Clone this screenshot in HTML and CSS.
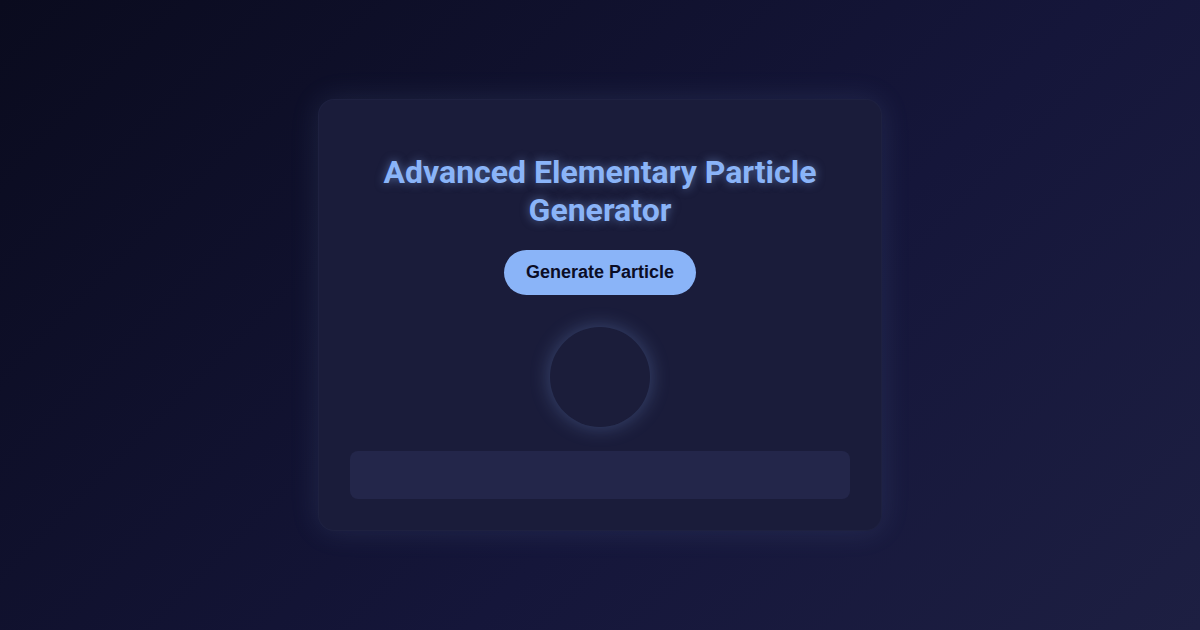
FILE: index.html
```html
<!DOCTYPE html>
<html lang="en">
<head>
<meta charset="utf-8">
<title>Advanced Elementary Particle Generator</title>
<link rel="stylesheet" href="styles.css">
</head>
<body>
  <main class="card">
    <h1 class="title">Advanced Elementary Particle Generator</h1>
    <button class="generate">Generate Particle</button>
    <div class="particle"></div>
    <div class="status"></div>
  </main>
</body>
</html>
```

FILE: styles.css
```css
html, body {
  margin: 0;
  padding: 0;
}
body {
  min-height: 100vh;
  display: flex;
  align-items: center;
  justify-content: center;
  background: linear-gradient(135deg, #0a0b1e 0%, #15163a 60%, #1d1f42 100%);
  font-family: "Liberation Sans", Arial, sans-serif;
}
.card {
  width: 500px;
  padding: 31px;
  background: #1a1c3a;
  border: 1px solid rgba(138, 180, 248, 0.035);
  border-radius: 16px;
  box-shadow: 0 0 30px rgba(138, 180, 248, 0.12);
  display: flex;
  flex-direction: column;
  align-items: center;
}
.title {
  margin: 22px 0 21px;
  font-family: Roboto, "Liberation Sans", sans-serif;
  font-weight: 700;
  font-size: 32px;
  line-height: 38px;
  text-align: center;
  color: #8ab4f8;
  text-shadow: 0 0 10px rgba(138, 180, 248, 0.5);
}
.generate {
  border: none;
  border-radius: 24px;
  background: #8ab4f8;
  color: #0b0d26;
  font-family: "Liberation Sans", Arial, sans-serif;
  font-weight: 700;
  font-size: 18px;
  line-height: 21px;
  padding: 12px 22px;
  cursor: pointer;
}
.particle {
  width: 100px;
  height: 100px;
  margin-top: 32px;
  border-radius: 50%;
  background: #1b1d3a;
  box-shadow: 0 0 20px rgba(138, 180, 248, 0.3);
}
.status {
  align-self: stretch;
  height: 48px;
  margin-top: 24px;
  border-radius: 8px;
  background: #23264a;
}
```
